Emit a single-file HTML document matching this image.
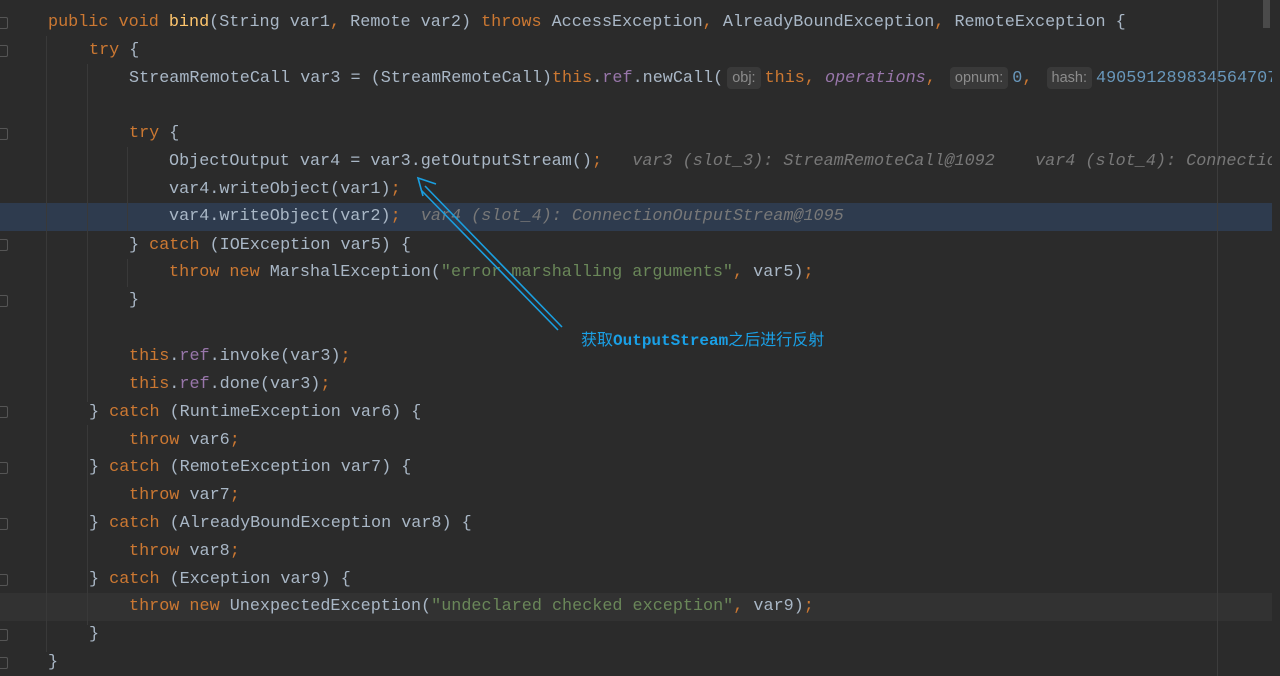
<!DOCTYPE html>
<html><head><meta charset="utf-8"><style>
body{margin:0;width:1280px;height:676px;background:#2b2b2b;overflow:hidden;position:relative;font-family:"Liberation Mono",monospace;font-size:16.8px;color:#a9b7c6}
#w{position:absolute;left:0;top:1px;width:1272px;height:675px;overflow:hidden}
.l{position:absolute;height:28px;line-height:28px;white-space:pre}
.k{color:#cc7832}.s{color:#6a8759}.n{color:#6897bb}.f{color:#9876aa;font-style:italic}
.h{color:#787878;font-style:italic}.fn{color:#ffc66d}
.p{display:inline-block;background:#393939;color:#8c8c8c;font-family:"Liberation Sans",sans-serif;font-size:14.5px;line-height:22px;padding:0 5px;border-radius:4px;margin:0 4px}
.g{position:absolute;width:1px;background:#393939}
.fold{position:absolute;left:0;width:7px;height:10px;border:1px solid #555;border-left:none;border-radius:0 2px 2px 0}
</style></head><body>
<div style="position:absolute;left:0;top:203px;width:1272px;height:28px;background:#2e3b4e"></div>
<div style="position:absolute;left:0;top:593px;width:1272px;height:28px;background:#323232"></div>
<div style="position:absolute;left:1217px;top:0;width:1px;height:676px;background:#3c3c3c"></div>
<div style="position:absolute;left:1263px;top:0;width:7px;height:28px;background:#4a4a4a"></div>
<div class="g" style="left:46px;top:36px;height:616px"></div>
<div class="g" style="left:87px;top:64px;height:338px"></div>
<div class="g" style="left:87px;top:425px;height:200px"></div>
<div class="g" style="left:127px;top:147px;height:84px"></div>
<div class="g" style="left:127px;top:259px;height:28px"></div>
<div class="fold" style="top:17px"></div><div class="fold" style="top:45px"></div><div class="fold" style="top:128px"></div>
<div class="fold" style="top:239px"></div><div class="fold" style="top:295px"></div><div class="fold" style="top:406px"></div>
<div class="fold" style="top:462px"></div><div class="fold" style="top:518px"></div><div class="fold" style="top:574px"></div>
<div class="fold" style="top:629px"></div><div class="fold" style="top:657px"></div>
<div id="w">
<div class="l" style="left:48px;top:8px"><span class="k">public void </span><span class="fn">bind</span>(String var1<span class="k">, </span>Remote var2) <span class="k">throws </span>AccessException<span class="k">, </span>AlreadyBoundException<span class="k">, </span>RemoteException {</div>
<div class="l" style="left:89px;top:36px"><span class="k">try </span>{</div>
<div class="l" style="left:129px;top:64px">StreamRemoteCall var3 = (StreamRemoteCall)<span class="k">this</span>.<span class="f" style="font-style:normal">ref</span>.newCall(<span class="p">obj:</span><span class="k">this, </span><span class="f">operations</span><span class="k">, </span><span class="p">opnum:</span><span class="n">0</span><span class="k">, </span><span class="p">hash:</span><span class="n">4905912898345647071L</span></div>
<div class="l" style="left:129px;top:119px"><span class="k">try </span>{</div>
<div class="l" style="left:169px;top:147px">ObjectOutput var4 = var3.getOutputStream()<span class="k">;</span>   <span class="h">var3 (slot_3): StreamRemoteCall@1092    var4 (slot_4): ConnectionOutputStream@1095</span></div>
<div class="l" style="left:169px;top:175px">var4.writeObject(var1)<span class="k">;</span></div>
<div class="l" style="left:169px;top:202px">var4.writeObject(var2)<span class="k">;</span>  <span class="h">var4 (slot_4): ConnectionOutputStream@1095</span></div>
<div class="l" style="left:129px;top:231px">} <span class="k">catch </span>(IOException var5) {</div>
<div class="l" style="left:169px;top:258px"><span class="k">throw new </span>MarshalException(<span class="s">"error marshalling arguments"</span><span class="k">, </span>var5)<span class="k">;</span></div>
<div class="l" style="left:129px;top:286px">}</div>
<div class="l" style="left:129px;top:342px"><span class="k">this</span>.<span class="f" style="font-style:normal">ref</span>.invoke(var3)<span class="k">;</span></div>
<div class="l" style="left:129px;top:370px"><span class="k">this</span>.<span class="f" style="font-style:normal">ref</span>.done(var3)<span class="k">;</span></div>
<div class="l" style="left:89px;top:398px">} <span class="k">catch </span>(RuntimeException var6) {</div>
<div class="l" style="left:129px;top:426px"><span class="k">throw </span>var6<span class="k">;</span></div>
<div class="l" style="left:89px;top:453px">} <span class="k">catch </span>(RemoteException var7) {</div>
<div class="l" style="left:129px;top:481px"><span class="k">throw </span>var7<span class="k">;</span></div>
<div class="l" style="left:89px;top:509px">} <span class="k">catch </span>(AlreadyBoundException var8) {</div>
<div class="l" style="left:129px;top:537px"><span class="k">throw </span>var8<span class="k">;</span></div>
<div class="l" style="left:89px;top:565px">} <span class="k">catch </span>(Exception var9) {</div>
<div class="l" style="left:129px;top:592px"><span class="k">throw new </span>UnexpectedException(<span class="s">"undeclared checked exception"</span><span class="k">, </span>var9)<span class="k">;</span></div>
<div class="l" style="left:89px;top:620px">}</div>
<div class="l" style="left:48px;top:648px">}</div>
</div>
<svg style="position:absolute;left:0;top:0" width="1280" height="676"><g stroke="#1a9fe0" stroke-width="1.6" fill="none">
<path d="M562 327 L425 186 M558 330 L421 190"/><path d="M436 184 L418 178 L423 196"/></g></svg>
<div style="position:absolute;left:581px;top:330px;font-size:16px;line-height:22px;color:#1aa0e6;font-family:'Liberation Sans','Noto Sans CJK SC',sans-serif;white-space:pre">获取<span style="font-family:'Liberation Mono',monospace;font-weight:bold">OutputStream</span>之后进行反射</div>
</body></html>
